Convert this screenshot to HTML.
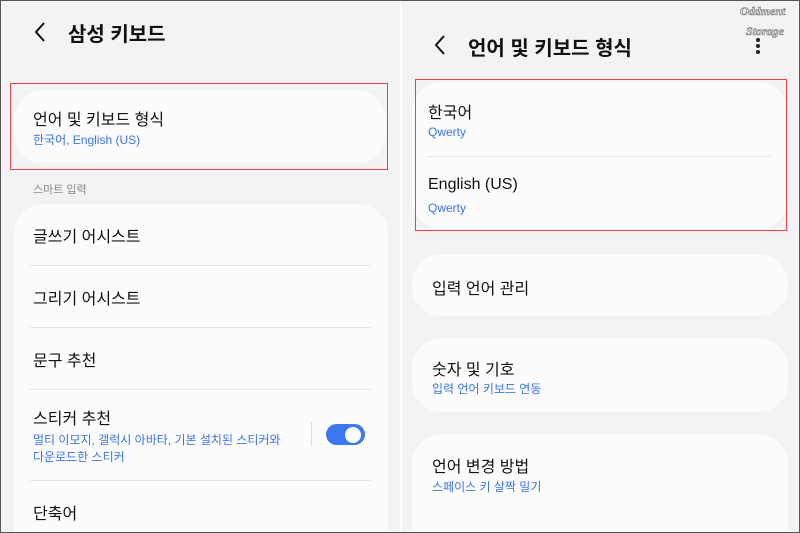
<!DOCTYPE html>
<html><head><meta charset="utf-8"><style>
*{margin:0;padding:0;box-sizing:border-box}
html,body{width:800px;height:533px;overflow:hidden}
body{background:#f3f3f5;font-family:"Liberation Sans","Noto Sans CJK KR",sans-serif;position:relative;color:#111}
.frame{position:absolute;left:0;top:0;width:800px;height:533px;border:1.5px solid #555;z-index:10;pointer-events:none}
.abs{position:absolute}
.card{position:absolute;background:#fcfcfe;border-radius:30px}
.t{position:absolute;font-size:16px;white-space:nowrap;color:#111}
.s{position:absolute;font-size:12px;white-space:nowrap;color:#3b74e8}
.h{position:absolute;font-size:20px;font-weight:bold;white-space:nowrap}
.hr{position:absolute;height:1px;background:#e6e6e9}
.red{position:absolute;border:1.5px solid #e8414a;z-index:5}
</style></head><body>
<div class="frame"></div>
<div class="abs" style="left:400px;top:0;width:1.5px;height:533px;background:#fff"></div>

<!-- left -->
<svg class="abs" style="left:33px;top:21px" width="14" height="22"><path d="M11 2 L3 11 L11 20" fill="none" stroke="#111" stroke-width="2"/></svg>
<div class="h" style="left:68px;top:18px">삼성 키보드</div>
<div class="card" style="left:14px;top:90px;width:372px;height:73px"></div>
<div class="red" style="left:10px;top:83px;width:378px;height:87px"></div>
<div class="t" style="left:33px;top:106px">언어 및 키보드 형식</div>
<div class="s" style="left:33px;top:131px">한국어, English (US)</div>
<div class="abs" style="left:33px;top:181px;font-size:11px;color:#888">스마트 입력</div>
<div class="card" style="left:14px;top:204px;width:374px;height:329px;border-bottom-left-radius:0;border-bottom-right-radius:0"></div>
<div class="t" style="left:33px;top:223px">글쓰기 어시스트</div>
<div class="hr" style="left:30px;top:265px;width:341px"></div>
<div class="t" style="left:33px;top:285px">그리기 어시스트</div>
<div class="hr" style="left:30px;top:327px;width:341px"></div>
<div class="t" style="left:33px;top:347px">문구 추천</div>
<div class="hr" style="left:30px;top:389px;width:341px"></div>
<div class="t" style="left:33px;top:405px">스티커 추천</div>
<div class="s" style="left:33px;top:431px">멀티 이모지, 갤럭시 아바타, 기본 설치된 스티커와</div>
<div class="s" style="left:33px;top:448px">다운로드한 스티커</div>
<div class="abs" style="left:311px;top:422px;width:1px;height:24px;background:#ddd"></div>
<div class="abs" style="left:326px;top:424px;width:39px;height:21px;border-radius:11px;background:#3b78f0"></div>
<div class="abs" style="left:345px;top:427px;width:16px;height:16px;border-radius:50%;background:#fff"></div>
<div class="hr" style="left:30px;top:480px;width:341px"></div>
<div class="t" style="left:33px;top:500px">단축어</div>

<!-- right -->
<svg class="abs" style="left:433px;top:34px" width="14" height="22"><path d="M11 2 L3 11 L11 20" fill="none" stroke="#111" stroke-width="2"/></svg>
<div class="h" style="left:468px;top:32px">언어 및 키보드 형식</div>
<div class="abs" style="left:756px;top:38px;width:4px;height:4px;border-radius:50%;background:#222;box-shadow:0 6px 0 #222,0 12px 0 #222"></div>
<div class="abs" style="left:740px;top:4px;font-size:12px;font-style:italic;font-weight:bold;color:#ddd;-webkit-text-stroke:0.6px #777;font-family:'Liberation Serif',serif">Oddment</div>
<div class="abs" style="left:746px;top:24px;font-size:12px;font-style:italic;font-weight:bold;color:#ddd;-webkit-text-stroke:0.6px #777;font-family:'Liberation Serif',serif">Storage</div>
<div class="card" style="left:412px;top:82px;width:376px;height:147px"></div>
<div class="red" style="left:415px;top:79px;width:372px;height:152px"></div>
<div class="t" style="left:428px;top:99px">한국어</div>
<div class="s" style="left:428px;top:125px">Qwerty</div>
<div class="hr" style="left:428px;top:156px;width:343px"></div>
<div class="t" style="left:428px;top:176px">English (US)</div>
<div class="s" style="left:428px;top:201px">Qwerty</div>
<div class="card" style="left:412px;top:254px;width:376px;height:62px"></div>
<div class="t" style="left:432px;top:275px">입력 언어 관리</div>
<div class="card" style="left:412px;top:338px;width:376px;height:74px"></div>
<div class="t" style="left:432px;top:356px">숫자 및 기호</div>
<div class="s" style="left:432px;top:380px">입력 언어 키보드 연동</div>
<div class="card" style="left:412px;top:434px;width:376px;height:99px;border-bottom-left-radius:0;border-bottom-right-radius:0"></div>
<div class="t" style="left:432px;top:453px">언어 변경 방법</div>
<div class="s" style="left:432px;top:478px">스페이스 키 살짝 밀기</div>
</body></html>
